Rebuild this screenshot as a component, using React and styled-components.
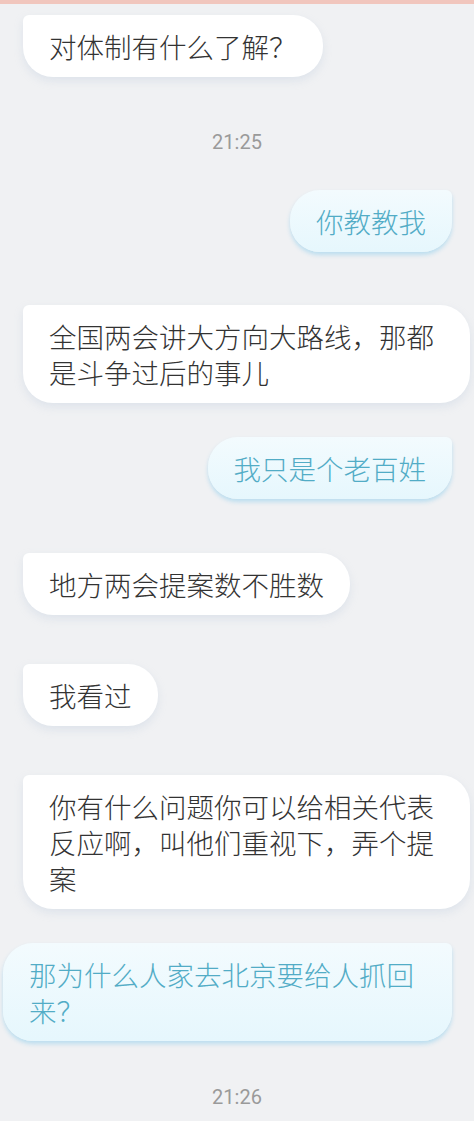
import React from 'react'
import styled, { createGlobalStyle } from 'styled-components'

const messages = [
  { id: 1, from: 'them', text: '对体制有什么了解？', space: 11 },
  { id: 't1', time: '21:25', space: 53, after: 36 },
  { id: 2, from: 'me', text: '你教教我', space: 0 },
  { id: 3, from: 'them', text: '全国两会讲大方向大路线，那都是斗争过后的事儿', space: 53 },
  { id: 4, from: 'me', text: '我只是个老百姓', space: 34 },
  { id: 5, from: 'them', text: '地方两会提案数不胜数', space: 54 },
  { id: 6, from: 'them', text: '我看过', space: 49 },
  { id: 7, from: 'them', text: '你有什么问题你可以给相关代表反应啊，叫他们重视下，弄个提案', space: 49 },
  { id: 8, from: 'me', text: '那为什么人家去北京要给人抓回来？', space: 34 },
  { id: 't2', time: '21:26', space: 44, after: 0 },
]

function App() {
  return (
    <>
      <GlobalStyle />
      <Page>
        <TopStrip />
        <Thread>
          {messages.map((m) =>
            m.time ? (
              <TimeStamp key={m.id} $space={m.space} $after={m.after}>{m.time}</TimeStamp>
            ) : (
              <Row key={m.id} $sent={m.from === 'me'} $space={m.space}>
                <Bubble $sent={m.from === 'me'}>{m.text}</Bubble>
              </Row>
            )
          )}
        </Thread>
      </Page>
    </>
  )
}

const GlobalStyle = createGlobalStyle`
  html, body {
    margin: 0;
    padding: 0;
    background: #f0f1f3;
  }
`;

const Page = styled.div`
  width: 474px;
  min-height: 1121px;
  background: #f0f1f3;
  font-family: "Noto Sans CJK SC", "Noto Sans", sans-serif;
  overflow: hidden;
`;

const TopStrip = styled.div`
  height: 4px;
  background: #f1c6bd;
`;

const Thread = styled.div`
  display: flex;
  flex-direction: column;
`;

const Row = styled.div`
  display: flex;
  justify-content: ${(p) => (p.$sent ? 'flex-end' : 'flex-start')};
  margin-top: ${(p) => p.$space}px;
  padding: ${(p) => (p.$sent ? '0 22px 0 0' : '0 0 0 23px')};
`;

const Bubble = styled.div`
  box-sizing: border-box;
  max-width: ${(p) => (p.$sent ? '449px' : '447px')};
  padding: 13px 26px;
  font-size: 27.5px;
  font-weight: 300;
  line-height: 36px;
  color: ${(p) => (p.$sent ? '#52acc6' : '#333333')};
  background: ${(p) =>
    p.$sent ? 'linear-gradient(180deg, #f3fbfe 0%, #e6f7fd 100%)' : '#ffffff'};
  border-radius: ${(p) => (p.$sent ? '30px 6px 30px 30px' : '6px 30px 30px 30px')};
  box-shadow: ${(p) =>
    p.$sent
      ? '0 3px 4px rgba(125, 200, 235, 0.45)'
      : '0 4px 8px rgba(175, 195, 215, 0.28)'};
`;

const TimeStamp = styled.div`
  margin-top: ${(p) => p.$space}px;
  margin-bottom: ${(p) => p.$after}px;
  text-align: center;
  font-family: Roboto, "Liberation Sans", sans-serif;
  font-size: 20px;
  line-height: 24px;
  color: #9a9a9a;
`;

export default App
